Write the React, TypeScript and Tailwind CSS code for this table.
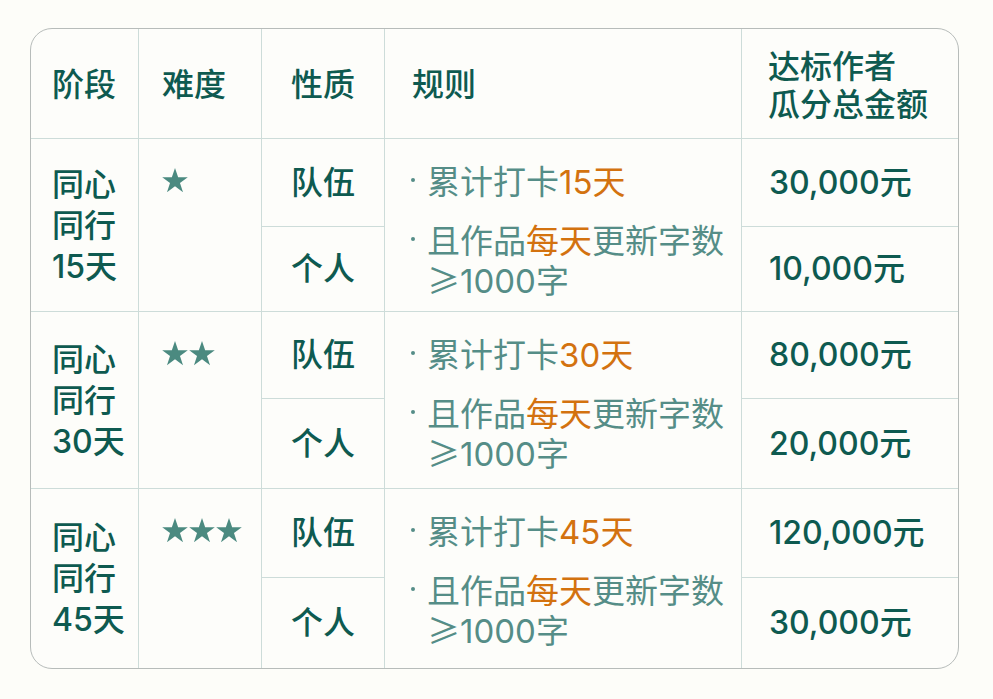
import React from 'react';

const FONT = { fontFamily: 'Inter, "Noto Sans CJK SC", "Noto Sans", sans-serif' };
const CJK = { fontFamily: '"Noto Sans CJK SC", sans-serif' };

type Group = { stage: string; stars: number; days: string; team: string; solo: string; rows: [string, string] };

const groups: Group[] = [
    { stage: '15天', stars: 1, days: '15天', team: '30,000元', solo: '10,000元', rows: ['row-start-2', 'row-start-3'] },
    { stage: '30天', stars: 2, days: '30天', team: '80,000元', solo: '20,000元', rows: ['row-start-4', 'row-start-5'] },
    { stage: '45天', stars: 3, days: '45天', team: '120,000元', solo: '30,000元', rows: ['row-start-6', 'row-start-7'] },
];

const line = 'border-[#cddcd9]';

const Star = () => (
    <svg width="26" height="25" viewBox="0 0 24 23" className="fill-[#4b8a80]">
        <path d="M12 0l2.9 8.4h8.9l-7.2 5.3 2.8 8.6L12 16.9l-7.4 5.4 2.8-8.6L0.2 8.4h8.9z" />
    </svg>
);

const Bullet = ({ children }: { children: React.ReactNode }) => (
    <div className="flex items-start">
        <span className="w-[16px] h-[40px] shrink-0 flex items-center">
            <span className="w-[4px] h-[4px] rounded-full bg-[#558d87] -mt-[4px]" />
        </span>
        <span className="leading-[40px]">{children}</span>
    </div>
);

export default function App() {
    return (
        <div className="min-h-[699px] w-[993px] bg-[#fdfdf9] pt-[28px] pl-[30px]" style={FONT}>
            <div className="w-[929px] border border-[#b7bcba] rounded-[22px] overflow-hidden bg-[#fdfdfa]">
                <div className="grid grid-cols-[108px_123px_123px_357px_216px] grid-rows-[110px_88px_85px_87px_90px_89px_90px] text-[#0e5a50] font-medium text-[32px]">
                    {/* Header */}
                    <div className={`col-start-1 row-start-1 border-r border-b ${line} flex items-center pl-[21px] pt-[2px]`}>阶段</div>
                    <div className={`col-start-2 row-start-1 border-r border-b ${line} flex items-center pl-[23px] pt-[2px]`}>难度</div>
                    <div className={`col-start-3 row-start-1 border-r border-b ${line} flex items-center justify-center pt-[2px]`}>性质</div>
                    <div className={`col-start-4 row-start-1 border-r border-b ${line} flex items-center pl-[27px] pt-[2px]`}>规则</div>
                    <div className={`col-start-5 row-start-1 border-b ${line} flex flex-col justify-center pl-[26px] leading-[38px] pt-[4px]`}>
                        <span>达标作者</span>
                        <span>瓜分总金额</span>
                    </div>

                    {groups.map((g, i) => {
                        const last = i === groups.length - 1;
                        const span = i === 0 ? 'row-start-2 row-span-2' : i === 1 ? 'row-start-4 row-span-2' : 'row-start-6 row-span-2';
                        const bottom = last ? '' : 'border-b';
                        return (
                            <React.Fragment key={g.stage}>
                                <div className={`col-start-1 ${span} border-r ${bottom} ${line} flex flex-col justify-center pl-[21px] leading-[41px]`}>
                                    <span>同心</span>
                                    <span>同行</span>
                                    <span>{g.stage}</span>
                                </div>
                                <div className={`col-start-2 ${span} border-r ${bottom} ${line} pl-[23px] pt-[29px]`}>
                                    <div className="flex gap-[1px]">
                                        {Array.from({ length: g.stars }).map((_, k) => (
                                            <Star key={k} />
                                        ))}
                                    </div>
                                </div>
                                <div className={`col-start-3 ${g.rows[0]} border-r border-b ${line} flex items-center justify-center`}>队伍</div>
                                <div className={`col-start-3 ${g.rows[1]} border-r ${bottom} ${line} flex items-center justify-center`}>个人</div>
                                <div className={`col-start-4 ${span} border-r ${bottom} ${line} pl-[26px] pt-[23px] text-[33px] font-normal text-[#558d87] flex flex-col gap-[19px]`}>
                                    <Bullet>
                                        累计打卡<span className="text-[#d3720f]">{g.days}</span>
                                    </Bullet>
                                    <Bullet>
                                        且作品<span className="text-[#d3720f]">每天</span>更新字数
                                        <br />
                                        <span className="leading-none" style={CJK}>≥</span>1000字
                                    </Bullet>
                                </div>
                                <div className={`col-start-5 ${g.rows[0]} border-b ${line} flex items-center pl-[27px]`}>{g.team}</div>
                                <div className={`col-start-5 ${g.rows[1]} ${bottom} ${line} flex items-center pl-[27px]`}>{g.solo}</div>
                            </React.Fragment>
                        );
                    })}
                </div>
            </div>
        </div>
    );
}
